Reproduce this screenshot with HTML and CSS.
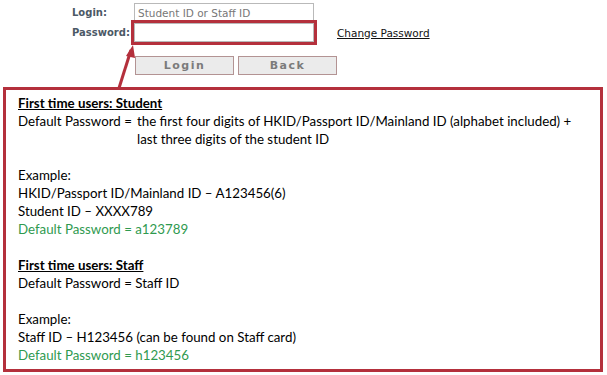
FILE: index.html
```html
<!DOCTYPE html>
<html>
<head>
<meta charset="utf-8">
<link rel="stylesheet" href="styles.css">
</head>
<body>
<div class="page">
  <form class="login">
    <label class="lbl">Login:</label>
    <input class="field" type="text" placeholder="Student ID or Staff ID">
    <span></span>
    <label class="lbl">Password:</label>
    <input class="field hl" type="password">
    <a class="change" href="#">Change Password</a>
  </form>
  <div class="buttons">
    <button class="btn" type="button">Login</button>
    <button class="btn" type="button">Back</button>
  </div>
  <div class="note">
    <div class="head">First time users: Student</div>
    <div class="def"><span class="def-k">Default Password =</span><span class="def-v">the first four digits of HKID/Passport ID/Mainland ID (alphabet included) + last three digits of the student ID</span></div>
    <div class="gap"></div>
    <div>Example:</div>
    <div>HKID/Passport ID/Mainland ID – A123456(6)</div>
    <div>Student ID – XXXX789</div>
    <div class="green">Default Password = a123789</div>
    <div class="gap"></div>
    <div class="head">First time users: Staff</div>
    <div>Default Password = Staff ID</div>
    <div class="gap"></div>
    <div>Example:</div>
    <div>Staff ID – H123456 (can be found on Staff card)</div>
    <div class="green">Default Password = h123456</div>
  </div>
  <svg class="arrow" width="40" height="60" viewBox="0 0 40 60">
    <line x1="9" y1="52" x2="21" y2="14" stroke="#b4303c" stroke-width="3"/>
    <polygon points="23,9 16,20 25,22" fill="#b4303c"/>
  </svg>
</div>
</body>
</html>
```
FILE: styles.css
```css
html, body {
  margin: 0;
  padding: 0;
  background: #fff;
}
.page {
  position: relative;
  width: 607px;
  height: 375px;
}
.login {
  display: grid;
  grid-template-columns: 62px 180px auto;
  grid-auto-rows: 19px;
  row-gap: 1px;
  padding: 3px 0 0 72px;
  margin: 0;
  align-items: center;
}
.lbl {
  font-family: "DejaVu Sans", Verdana, sans-serif;
  font-weight: bold;
  font-size: 10px;
  color: #4b5866;
  white-space: nowrap;
}
.field {
  box-sizing: border-box;
  width: 180px;
  height: 19px;
  margin: 0;
  border: 1px solid #b9b9b9;
  padding: 0 3px;
  font-family: "DejaVu Sans", Verdana, sans-serif;
  font-size: 10.5px;
  color: #333;
  background: #fff;
}
.field::placeholder { color: #777; }
.hl {
  outline: 3px solid #b4303c;
  outline-offset: 0;
}
.change {
  margin-left: 23px;
  font-family: "DejaVu Sans", Verdana, sans-serif;
  font-size: 10.5px;
  color: #111;
  text-decoration: underline;
  white-space: nowrap;
}
.buttons {
  display: flex;
  gap: 4px;
  margin: 14px 0 0 135px;
}
.btn {
  box-sizing: border-box;
  width: 99px;
  height: 19px;
  margin: 0;
  padding: 0;
  border: 1px solid #b39393;
  background: #ebebeb;
  font-family: "DejaVu Sans", Verdana, sans-serif;
  font-weight: bold;
  font-size: 11px;
  letter-spacing: 1.5px;
  color: #7b7b7b;
}
.note {
  box-sizing: border-box;
  width: 600px;
  height: 285px;
  margin: 12px 0 0 3px;
  border: 3px solid #b4303c;
  padding: 4px 0 0 12px;
  font-family: "Lato", "Open Sans", sans-serif;
  font-size: 13.3px;
  line-height: 18px;
  color: #000;
}
.head {
  font-weight: bold;
  text-decoration: underline;
}
.def { display: flex; }
.def-k { white-space: nowrap; width: 119px; flex: none; }
.def-v { width: 447px; }
.gap { height: 18px; }
.green { color: #2f9a50; }
.arrow {
  position: absolute;
  left: 110px;
  top: 36px;
}
```
